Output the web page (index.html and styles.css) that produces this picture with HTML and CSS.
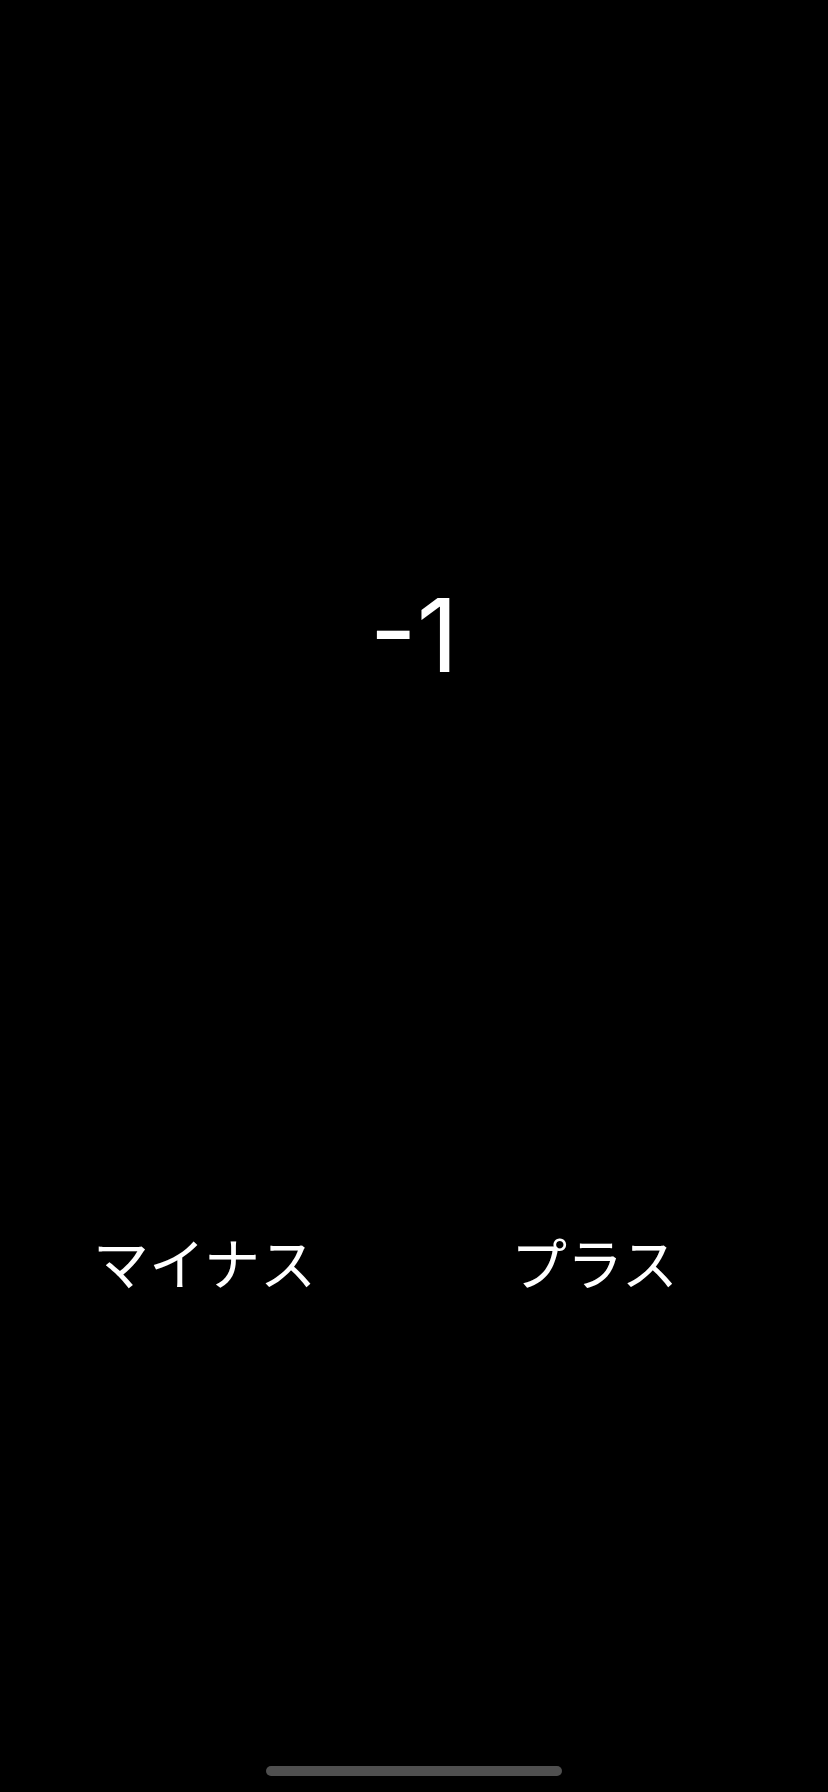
FILE: index.html
```html
<!DOCTYPE html>
<html lang="ja">
<head>
<meta charset="utf-8">
<link rel="stylesheet" href="styles.css">
</head>
<body>
<main class="screen">
  <div class="count">-1</div>
  <div class="buttons">
    <button class="btn btn-minus">マイナス</button>
    <button class="btn btn-plus">プラス</button>
  </div>
  <div class="home-indicator"></div>
</main>
</body>
</html>
```
FILE: styles.css
```css
html, body {
  margin: 0;
  padding: 0;
  background: #000;
}
.screen {
  position: relative;
  width: 828px;
  height: 1792px;
  background: #000;
  display: flex;
  flex-direction: column;
  align-items: center;
}
.count {
  margin-top: 573px;
  color: #fff;
  font-family: Inter, "Noto Sans", sans-serif;
  font-size: 102px;
  line-height: 124px;
  height: 124px;
  text-align: center;
}
.buttons {
  align-self: stretch;
  display: flex;
  flex-direction: row;
  padding-left: 93px;
  gap: 195px;
  margin-top: 532px;
}
.btn {
  background: none;
  border: none;
  padding: 0;
  margin: 0;
  color: #fff;
  font-family: "Noto Sans CJK JP", sans-serif;
  font-size: 56px;
  line-height: 64px;
  cursor: pointer;
}
.home-indicator {
  position: absolute;
  left: 266px;
  bottom: 16px;
  width: 296px;
  height: 10px;
  border-radius: 5px;
  background: #4f4f4f;
}
```
